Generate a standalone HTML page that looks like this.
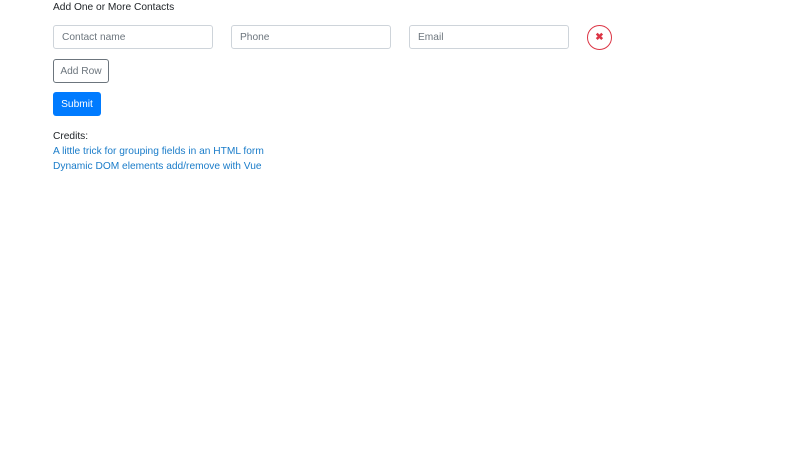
<!DOCTYPE html>
<html><head><style>
body{margin:0;background:#fff;font-family:"Liberation Sans",sans-serif;font-size:10.2px;color:#212529;}
.a{position:absolute}
.in{position:absolute;top:25px;color:#6c757d;font-size:10.2px;line-height:24px;padding-left:8px;box-sizing:border-box;height:24px;width:160px;border:1px solid #ced4da;border-radius:3px}
a{color:#1a7cc9;text-decoration:none}
</style></head><body>
<div class="a" style="left:53px;top:2px">Add One or More Contacts</div>
<div class="in" style="left:53px">Contact name</div>
<div class="in" style="left:231px">Phone</div>
<div class="in" style="left:409px">Email</div>
<div class="a" style="left:587px;top:25px;width:23px;height:23px;border:1px solid #dc3545;border-radius:50%;color:#dc3545;text-align:center;line-height:24px;font-size:10px;font-weight:bold">✖</div>
<div class="a" style="left:53px;top:59px;width:54px;height:22px;border:1px solid #6c757d;border-radius:3px;color:#6c757d;line-height:24px;text-align:center">Add Row</div>
<div class="a" style="left:53px;top:92px;width:48px;height:24px;background:#007bff;border-radius:3px;color:#fff;line-height:25px;text-align:center">Submit</div>
<div class="a" style="left:53px;top:129px;line-height:15px">Credits:<br><a>A little trick for grouping fields in an HTML form</a><br><a>Dynamic DOM elements add/remove with Vue</a></div>
</body></html>
